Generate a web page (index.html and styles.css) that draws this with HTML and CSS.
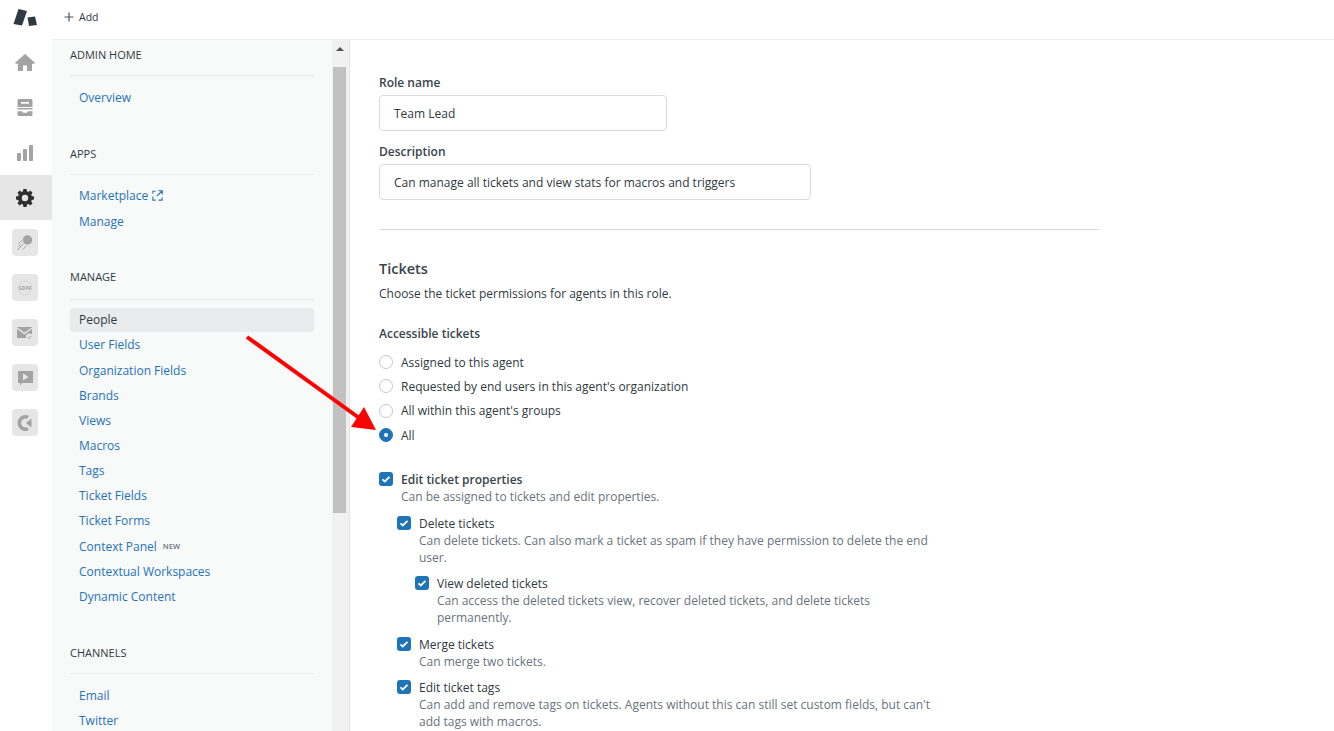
FILE: index.html
```html
<!DOCTYPE html>
<html lang="en">
<head>
<meta charset="utf-8">
<title>Role</title>
<link rel="stylesheet" href="styles.css">
</head>
<body>
<div class="app">
  <nav class="rail">
    <div class="rail-logo"><svg width="52" height="40" viewBox="0 0 52 40"><path class="ic-dark" d="M18.500 9L27 11 22 25.500 13.500 24z"/><path class="ic-dark" d="M27.500 17.500L35 16.500 37 25 29 26z"/></svg></div>
    <a class="rail-item"><svg width="20" height="17" viewBox="0 0 20 17"><path class="ic-grey" d="M10 0L0 8.800l.8.900H3V17h5v-5.500h4V17h5V9.700h2.200l.8-.9z"/></svg></a>
    <a class="rail-item"><svg width="16" height="17" viewBox="0 0 16 17"><path class="ic-grey" fill-rule="evenodd" d="M2 0h12a1.500 1.500 0 0 1 1.500 1.500V8H.5V1.500A1.500 1.500 0 0 1 2 0zm2 3v1.700h8V3zM.5 9h15v6.500A1.500 1.500 0 0 1 14 17H2a1.500 1.500 0 0 1-1.500-1.500zm0 1.500v1.800h4.700l.8 1.400h4l.8-1.400h4.700v-1.800z"/></svg></a>
    <a class="rail-item"><svg width="16" height="16" viewBox="0 0 16 16"><rect class="ic-grey" x="0" y="8" width="4" height="8" rx=".8"/><rect class="ic-grey" x="6" y="4" width="4" height="12" rx=".8"/><rect class="ic-grey" x="12" y="0" width="4" height="16" rx=".8"/></svg></a>
    <a class="rail-item rail-active"><svg width="18" height="18" viewBox="0 0 18 18"><path class="ic-black" fill-rule="evenodd" d="M7.400 0h3.200l.4 2.300 1.300.6 2-1.300 2.200 2.200-1.300 2 .5 1.300 2.300.4v3l-2.300.4-.5 1.300 1.300 2-2.200 2.200-2-1.300-1.300.5-.4 2.400H7.400L7 15.600l-1.300-.5-2 1.300-2.200-2.200 1.300-2-.5-1.300L0 10.500v-3l2.300-.4.500-1.300-1.300-2 2.200-2.200 2 1.300L7 2.300zM9 5.800a3.200 3.200 0 1 0 0 6.400 3.200 3.200 0 0 0 0-6.400z"/></svg></a>
    <a class="rail-app rail-app-first"><svg width="18" height="18" viewBox="0 0 18 18"><circle class="ic-grey" cx="11.500" cy="6" r="4.700"/><path class="ic-stroke" d="M6 6.500L2 10M7.500 9.500L1.500 16M10 12l-3 3.500M4.500 10.500l-2 2"/></svg></a>
    <a class="rail-app"><svg width="16" height="16" viewBox="0 0 16 16"><circle class="ic-dots" cx="8" cy="8" r="6.700"/><text class="gdpr" x="8" y="9.700" text-anchor="middle">GDPR</text></svg></a>
    <a class="rail-app"><svg width="18" height="16" viewBox="0 0 18 16"><path class="ic-grey" d="M1 2h15v11H1z"/><path class="ic-white" d="M1 3l7.500 5.500L16 3"/><circle class="ic-fill-white" cx="13.500" cy="12" r="3.600"/><path class="ic-stroke" d="M11.700 12l1.400 1.400 2.400-2.600"/></svg></a>
    <a class="rail-app"><svg width="18" height="18" viewBox="0 0 18 18"><path class="ic-grey" d="M2 2h15v12H6l-2 2.500V14H2z"/><path class="ic-fill-white" d="M7 4.500l5.500 3.500L7 11.500z"/></svg></a>
    <a class="rail-app"><svg width="18" height="18" viewBox="0 0 18 18"><path class="ic-grey" fill-rule="evenodd" d="M9.500 1a8 8 0 1 0 0 16c1.200 0 2.300-.3 3.300-.7l-1.500-3.200a4.500 4.500 0 1 1 0-8.300l1.600-3C12 1.300 10.800 1 9.500 1z"/><path class="ic-grey" d="M15.500 4.500v9L10 9z"/></svg></a>
  </nav>

  <div class="body">
    <header class="topbar"><span class="add"><svg width="10" height="10" viewBox="0 0 10 10"><path class="ic-plus" d="M5 .5v9M.5 5h9"/></svg>Add</span></header>
    <div class="panes">
      <aside class="side">
        <section class="sec sec-admin">
          <h3>ADMIN HOME</h3>
          <a>Overview</a>
        </section>
        <section class="sec sec-apps">
          <h3>APPS</h3>
          <a>Marketplace <svg class="ext" width="11" height="11" viewBox="0 0 11 11"><path d="M3.500 1.300H.9v2.500M.9 6.500v3.600h2.600M6.500 10.100h3.600V7.500M6.500.7h3.800v3.800M10 1L5 6"/></svg></a>
          <a>Manage</a>
        </section>
        <section class="sec sec-manage">
          <h3>MANAGE</h3>
          <a class="on">People</a>
          <a>User Fields</a>
          <a>Organization Fields</a>
          <a>Brands</a>
          <a>Views</a>
          <a>Macros</a>
          <a>Tags</a>
          <a>Ticket Fields</a>
          <a>Ticket Forms</a>
          <a>Context Panel <small>NEW</small></a>
          <a>Contextual Workspaces</a>
          <a>Dynamic Content</a>
        </section>
        <section class="sec">
          <h3>CHANNELS</h3>
          <a>Email</a>
          <a>Twitter</a>
        </section>
      </aside>
      <div class="scrollbar"><div class="sb-btn"></div><div class="sb-thumb"></div></div>
      <main class="main">
        <label class="lbl">Role name</label>
        <div class="input w288">Team Lead</div>
        <label class="lbl lbl2">Description</label>
        <div class="input w432">Can manage all tickets and view stats for macros and triggers</div>
        <hr class="rule">
        <h2>Tickets</h2>
        <p class="intro">Choose the ticket permissions for agents in this role.</p>
        <div class="lbl acc">Accessible tickets</div>
        <div class="radio"><i class="r"></i>Assigned to this agent</div>
        <div class="radio"><i class="r"></i>Requested by end users in this agent's organization</div>
        <div class="radio"><i class="r"></i>All within this agent's groups</div>
        <div class="radio"><i class="r sel"></i>All</div>

        <div class="check top">
          <i class="c"><svg width="14" height="14" viewBox="0 0 14 14"><path d="M3.500 7.300l2.300 2.200 4.700-4.700"/></svg></i>
          <div><b>Edit ticket properties</b><p>Can be assigned to tickets and edit properties.</p></div>
        </div>
        <div class="nest">
          <div class="check">
            <i class="c"><svg width="14" height="14" viewBox="0 0 14 14"><path d="M3.500 7.300l2.300 2.200 4.700-4.700"/></svg></i>
            <div><b>Delete tickets</b><p>Can delete tickets. Can also mark a ticket as spam if they have permission to delete the end user.</p></div>
          </div>
          <div class="nest nest2">
            <div class="check">
              <i class="c"><svg width="14" height="14" viewBox="0 0 14 14"><path d="M3.500 7.300l2.300 2.200 4.700-4.700"/></svg></i>
              <div><b>View deleted tickets</b><p>Can access the deleted tickets view, recover deleted tickets, and delete tickets permanently.</p></div>
            </div>
          </div>
          <div class="check">
            <i class="c"><svg width="14" height="14" viewBox="0 0 14 14"><path d="M3.500 7.300l2.300 2.200 4.700-4.700"/></svg></i>
            <div><b>Merge tickets</b><p>Can merge two tickets.</p></div>
          </div>
          <div class="check last">
            <i class="c"><svg width="14" height="14" viewBox="0 0 14 14"><path d="M3.500 7.300l2.300 2.200 4.700-4.700"/></svg></i>
            <div><b>Edit ticket tags</b><p>Can add and remove tags on tickets. Agents without this can still set custom fields, but can't add tags with macros.</p></div>
          </div>
        </div>
      </main>
    </div>
  </div>
  <svg class="arrow" width="160" height="110" viewBox="240 330 160 110"><path class="arrow-line" d="M247 337L362 420"/><path class="arrow-head" d="M376 430L351 427 364 407z"/></svg>
</div>
</body>
</html>
```
FILE: styles.css
```css
* { box-sizing: border-box; }
html, body { margin: 0; height: 100%; overflow: hidden; }
body { font-family: "Open Sans", "Noto Sans", sans-serif; font-size: 12px; color: #2f3941; background: #fff; }
.app { display: flex; height: 731px; position: relative; }

.rail { width: 52px; flex: none; display: flex; flex-direction: column; align-items: center; background: #fff; }
.rail-logo { height: 40px; width: 100%; }
.rail-logo svg { display: block; }
.rail-item { height: 45px; width: 100%; padding-right: 2px; display: flex; align-items: center; justify-content: center; }
.rail-active { background: #e6e6e6; }
.rail-app { width: 26px; height: 27px; margin: 18px 2px 0 0; border-radius: 4px; background: #e6e6e6; display: flex; align-items: center; justify-content: center; }
.rail-app-first { margin-top: 9px; }
.ic-dark { fill: #2f3941; }
.ic-grey { fill: #a3a3a3; }
.ic-black { fill: #2f2f2f; }
.ic-stroke { stroke: #a3a3a3; stroke-width: 1; fill: none; }
.ic-dots { fill: none; stroke: #b5b5b5; stroke-width: 1; stroke-dasharray: 1 2; }
.gdpr { font-size: 4.500px; font-weight: 700; fill: #a3a3a3; font-family: "Open Sans", sans-serif; }
.ic-white { fill: none; stroke: #e6e6e6; stroke-width: 1.500; }
.ic-fill-white { fill: #e6e6e6; }
.ic-plus { stroke: #49545c; stroke-width: 1.200; fill: none; }

.body { flex: 1; min-width: 0; display: flex; flex-direction: column; }
.topbar { height: 40px; flex: none; border-bottom: 1px solid #e9ebed; display: flex; align-items: center; padding-left: 12px; padding-bottom: 6px; }
.add { display: flex; align-items: center; gap: 5px; font-size: 10.500px; color: #2f3941; }
.panes { flex: 1; display: flex; min-height: 0; }

.side { width: 280px; flex: none; background: #f8f9f9; padding: 0 18px; overflow: hidden; }
.sec { padding-top: 5px; padding-bottom: 28px; }
.sec-admin { padding-bottom: 29px; }
.sec-apps { padding-bottom: 27.500px; }
.sec h3 { margin: 0 0 9px; padding-bottom: 11px; height: 31px; border-bottom: 1px solid #e9ebed; font-size: 11px; font-weight: 400; line-height: 20px; color: #2f3941; }
.sec-apps h3 { margin-bottom: 8px; }
.sec-manage { padding-bottom: 28.850px; }
.sec-manage h3 { height: 33px; margin-bottom: 8px; }
.sec a { display: flex; align-items: center; gap: 4px; height: 25.150px; padding-left: 9px; color: #1f73b7; border-radius: 3px; }
.sec-apps a + a { margin-top: .8px; }
.sec a.on { background: #e9ebed; color: #2f3941; height: 24px; margin-bottom: .6px; }
.sec small { font-size: 7.500px; color: #68737d; font-weight: 600; margin-left: 2px; }
.ext { fill: none; stroke: #1f73b7; stroke-width: 1.100; }

.scrollbar { flex: none; background: #f1f1f1; border-right: 1px solid #e3e5e7; width: 18px; }
.sb-btn { height: 17px; position: relative; }
.sb-btn::after { content: ""; position: absolute; left: 4px; top: 7px; border: 4px solid transparent; border-top: 0; border-bottom: 4px solid #505050; }
.sb-thumb { height: 446px; margin: 10px 3px 0 1px; background: #c1c1c1; }

.main { flex: 1; padding: 34px 0 0 29px; min-width: 0; }
.lbl { display: block; font-weight: 600; line-height: 18px; color: #39444c; }
.lbl2 { margin-top: 12px; }
.input { height: 36px; margin-top: 3px; border: 1px solid #d8dcde; border-radius: 4px; padding-left: 14px; line-height: 35px; }
.w288 { width: 288px; }
.w432 { width: 432px; }
.rule { width: 720px; margin: 29px 0 0; border: 0; border-top: 1px solid #d8dcde; }
h2 { margin: 28px 0 0; font-size: 14.500px; font-weight: 600; line-height: 22px; color: #39444c; }
.intro { margin: 5px 0 0; line-height: 18px; }
.acc { margin-top: 22px; margin-bottom: 7px; }
.radio { display: flex; align-items: center; gap: 8px; height: 24.300px; }
.r { width: 14px; height: 14px; border: 1px solid #c2c8cc; border-radius: 50%; background: #fff; display: block; flex: none; }
.r.sel { background: #1f73b7; border-color: #1f73b7; position: relative; }
.r.sel::after { content: ""; position: absolute; left: 4px; top: 4px; width: 4px; height: 4px; border-radius: 50%; background: #fff; }
.check { display: flex; gap: 8px; width: 560px; }
.check.top { margin-top: 24px; }
.check > div { flex: 1; min-width: 0; }
.c { width: 14px; height: 14px; margin-top: 1px; border-radius: 3px; background: #1f73b7; display: block; flex: none; }
.c svg { display: block; fill: none; stroke: #fff; stroke-width: 1.800; }
.check b { display: block; font-weight: 400; line-height: 17px; color: #2f3941; }
.top b { font-weight: 600; color: #39444c; }
.check p { margin: 0; line-height: 17px; color: #68737d; }
.nest { padding-left: 18px; }
.nest > .check { margin-top: 10px; width: 542px; }
.nest2 { padding-left: 18px; }
.nest2 > .check { width: 524px; margin-top: 9px; }
.nest2 + .check { margin-top: 10px; }
.nest > .check.last { margin-top: 9px; }

.arrow { position: absolute; left: 240px; top: 330px; }
.arrow-line { stroke: #f00; stroke-width: 4; fill: none; }
.arrow-head { fill: #f00; }
```
